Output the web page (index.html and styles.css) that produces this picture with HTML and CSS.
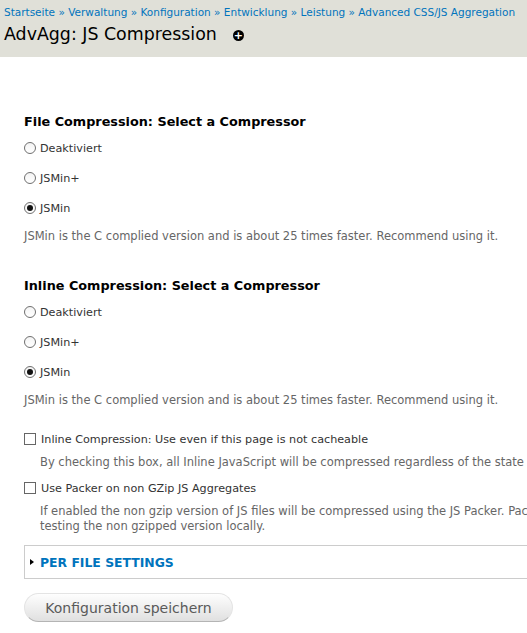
FILE: index.html
```html
<!DOCTYPE html>
<html lang="de">
<head>
  <meta charset="UTF-8">
  <title>AdvAgg: JS Compression</title>
  <link rel="stylesheet" href="styles.css">
</head>
<body>

<div class="branding">
  <div class="breadcrumb">
    <a href="#">Startseite</a> » <a href="#">Verwaltung</a> » <a href="#">Konfiguration</a> » <a href="#">Entwicklung</a> » <a href="#">Leistung</a> » <a href="#">Advanced CSS/JS Aggregation</a>
  </div>
  <h1 class="page-title">AdvAgg: JS Compression <span class="add-shortcut">+</span></h1>
</div>

<form class="page">
  <div class="form-item">
    <label class="title">File Compression: Select a Compressor</label>
    <div class="radios">
      <label class="option"><input type="radio" name="file"> Deaktiviert</label>
      <label class="option"><input type="radio" name="file"> JSMin+</label>
      <label class="option"><input type="radio" name="file" checked> JSMin</label>
    </div>
    <div class="description">JSMin is the C complied version and is about 25 times faster. Recommend using it.</div>
  </div>

  <div class="form-item last">
    <label class="title">Inline Compression: Select a Compressor</label>
    <div class="radios">
      <label class="option"><input type="radio" name="inline"> Deaktiviert</label>
      <label class="option"><input type="radio" name="inline"> JSMin+</label>
      <label class="option"><input type="radio" name="inline" checked> JSMin</label>
    </div>
    <div class="description">JSMin is the C complied version and is about 25 times faster. Recommend using it.</div>
  </div>

  <div class="checkbox-item">
    <label class="option"><input type="checkbox"> Inline Compression: Use even if this page is not cacheable</label>
    <div class="description indent">By checking this box, all Inline JavaScript will be compressed regardless of the state</div>
  </div>

  <div class="checkbox-item">
    <label class="option"><input type="checkbox"> Use Packer on non GZip JS Aggregates</label>
    <div class="description indent">If enabled the non gzip version of JS files will be compressed using the JS Packer. Packer<br>testing the non gzipped version locally.</div>
  </div>

  <fieldset class="collapsed">
    <legend><span class="arrow"></span>Per file settings</legend>
  </fieldset>

  <button type="button" class="submit">Konfiguration speichern</button>
</form>

</body>
</html>
```

FILE: styles.css
```css
html { overflow: hidden; }
body { margin: 0; font-family: "DejaVu Sans", Verdana, sans-serif; font-size: 11px; color: #333; background: #fff; }
a { color: #0074bd; text-decoration: none; }

.branding { background: #e0e0d8; height: 57px; padding: 0 4px; }
.breadcrumb { padding-top: 6px; font-size: 10.5px; color: #0074bd; white-space: nowrap; }
.page-title { margin: 6px 0 0; font-weight: normal; font-size: 17.4px; color: #000; white-space: nowrap; display: flex; align-items: center; }
.add-shortcut { display: inline-block; width: 11px; height: 11px; border-radius: 50%; background: #000; color: #fff; font-size: 11px; font-weight: bold; line-height: 11px; text-align: center; margin-left: 16px; margin-top: 2px; }

.page { padding: 57px 0 0 24px; width: 720px; }
.form-item { margin-bottom: 34px; }
.form-item.last { margin-bottom: 24px; }
.title { display: block; font-weight: bold; font-size: 12.8px; color: #000; margin-bottom: 12px; }
.radios { display: flex; flex-direction: column; gap: 16px; }
.option { display: flex; align-items: center; color: #333; font-size: 11.2px; height: 14px; }
.option input { margin: 0 4px 0 0; }
.radios input { appearance: none; width: 12px; height: 12px; border: 1px solid #6f6f6f; border-radius: 50%; background: linear-gradient(#f4f4f4, #fff); display: flex; align-items: center; justify-content: center; }
.radios input:checked::after { content: ""; width: 6px; height: 6px; border-radius: 50%; background: #111; }
.description { color: #666; font-size: 11.5px; margin-top: 14px; line-height: 15px; white-space: nowrap; }
.description.indent { padding-left: 16px; margin-top: 9px; }
.checkbox-item { margin-bottom: 11px; }
.checkbox-item .option input { appearance: none; border: 1px solid #666; background: #fff; width: 12px; height: 12px; margin-right: 5px; border-radius: 0; }

fieldset { border: 1px solid #ccc; margin: 4px 0 0; padding: 0 0 0 5px; height: 32px; }
fieldset legend { float: left; display: flex; align-items: center; height: 32px; padding: 0; font-weight: bold; font-size: 12.4px; text-transform: uppercase; color: #0074bd; }
.arrow { width: 0; height: 0; border-top: 3px solid transparent; border-bottom: 3px solid transparent; border-left: 4px solid #000; margin-right: 6px; }

.submit { margin-top: 14px; width: 209px; height: 29px; border: 1px solid #e4e4e4; border-bottom-color: #b4b4b4; border-radius: 15px; background: linear-gradient(#fefefe, #e0e0e0); color: #5a5a5a; font-family: "DejaVu Sans", Verdana, sans-serif; font-size: 14px; }
```
